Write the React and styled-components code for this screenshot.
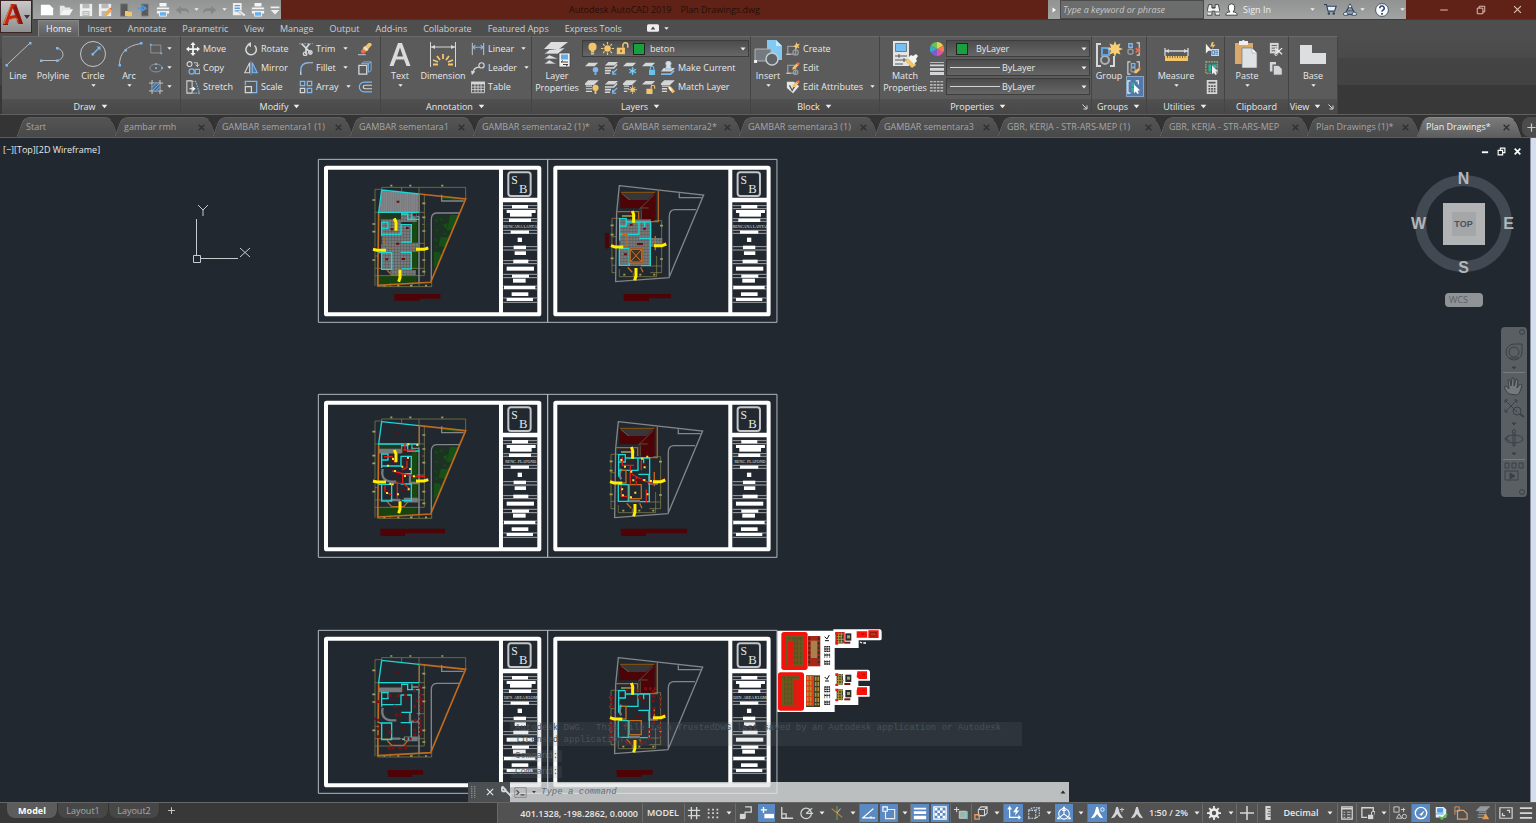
import React from 'react';
import styled, { createGlobalStyle } from 'styled-components';

const L = '#d4d6d8';
const B = '#7fb8ee';
const Y = '#f3c56b';
const G = '#959a9f';

/* small icons, all drawn on a 16 x 16 grid */
const icons = {
  caret: <path d="M3 5h10l-5 6z" fill="#eee" />,
  rect: <><path d="M2 3.500h11.500v9H2z" fill="none" stroke={G} /><path d="M1 2h2v2H1zM13 12h2v2h-2z" fill={B} /></>,
  ellipse: <><ellipse cx="8" cy="8" rx="7" ry="4.500" fill="none" stroke={G} /><path d="M7 7h2v2H7zM7 2.500h2v2H7zM14 7h2v2h-2z" fill={B} /></>,
  hatch: <><path d="M3.500 0v16M12.500 0v16M0 3.500h16M0 12.500h16" stroke={L} /><path d="M4 4h8v8H4z" fill="#476a92" /><path d="M4 8l4-4M4 12l8-8M8 12l4-4" stroke={B} /></>,
  move: <path d="M8 0l3 3.500H9V7h3.500V5L16 8l-3.500 3V9H9v3.500h2L8 16l-3-3.500h2V9H3.500v2L0 8l3.500-3v2H7V3.500H5z" fill="#f2f2f2" />,
  rotate: <><path d="M5 3.500a6 6 0 1 0 7 .5" fill="none" stroke={L} strokeWidth="1.800" /><path d="M8 0v6L3.500 2.500z" fill={L} /></>,
  trim: <><path d="M0 2h16" stroke={B} strokeDasharray="2 1" /><path d="M3 2l5 5v7M12 2L8 7l6 6" stroke={L} strokeWidth="2" fill="none" /><circle cx="7" cy="13.500" r="2" fill="none" stroke={L} strokeWidth="1.500" /><circle cx="13" cy="12" r="2" fill="none" stroke={L} strokeWidth="1.500" /></>,
  eraser: <><path d="M14.500 1l1.500 2-7 8-4-3 7-7z" fill={Y} /><path d="M9 11l-4-3-2 2.500q1 3 3.500 3z" fill="#ef6b4d" /><path d="M6.500 5.500l5 4" stroke="#eee" strokeWidth="1.500" /><path d="M0 14.500h9" stroke={L} /></>,
  copy: <><circle cx="4" cy="3.500" r="2.800" fill="none" stroke={L} strokeWidth="1.300" /><path d="M9 2h4v4M11 4l2 2.500L15 4" fill="none" stroke={L} /><circle cx="6.500" cy="12" r="3" fill="none" stroke={B} strokeWidth="1.300" /><path d="M10.500 9.500h5v5h-5z" fill="none" stroke={B} strokeWidth="1.300" /></>,
  mirror: <><path d="M6.500 2v11.500H.8z" fill="none" stroke={L} strokeWidth="1.200" /><path d="M9.500 2v11.500h5.700z" fill="#4f78a8" stroke={B} strokeWidth="1.200" /><path d="M8 0v16" stroke={B} strokeWidth=".7" /></>,
  fillet: <><path d="M2 16V11Q2 2 11 2" fill="none" stroke={B} strokeWidth="1.600" /><path d="M11 2h5M2 12v4" stroke={L} /></>,
  explode: <><path d="M1 5h9v10H1z" fill="none" stroke={L} strokeWidth="1.500" /><path d="M4 3l3-2h8v10l-3 2M10 5l5-4M12 3v10M4 3h8" fill="none" stroke={B} /></>,
  stretch: <><path d="M1 1h6v14H1z" fill="none" stroke={L} strokeWidth="1.200" /><path d="M7 2l4-.5L15.500 15H8" fill="none" stroke={B} strokeDasharray="2 1" strokeWidth="1.200" /><path d="M4 10h5M7.500 8l2.500 2-2.500 2" stroke="#fff" fill="none" strokeWidth="1.200" /></>,
  scale: <><path d="M1.500 6V1.500h13v13H9" fill="none" stroke={B} strokeWidth="1.400" /><path d="M1.500 7.500h7v7h-7z" fill="none" stroke={L} strokeWidth="1.400" /></>,
  array: <><path d="M1.500 1.500h5v5h-5zM9.500 1.500h5v5h-5zM9.500 9.500h5v5h-5z" fill="none" stroke={B} strokeWidth="1.400" /><path d="M1.500 9.500h5v5h-5z" fill="none" stroke={L} strokeWidth="1.400" /></>,
  offset: <><path d="M16 2.500H7a5.500 5.500 0 0 0 0 11h9" fill="none" stroke={B} strokeWidth="1.400" /><path d="M16 6H8a2 2 0 0 0 0 4h8" fill="none" stroke={L} strokeWidth="1.400" /></>,
  linear: <><path d="M1.500 1v14M14.500 1v14" stroke={L} /><path d="M2 6h12M5 3.500L2 6l3 2.500M11 3.500L14 6l-3 2.500" stroke={B} fill="none" strokeWidth="1.300" /></>,
  leader: <><path d="M1.500 15Q3 7 9 7" fill="none" stroke={L} strokeWidth="1.300" /><path d="M0 11l1 5 4-4z" fill={L} /><circle cx="12" cy="5" r="3" fill="none" stroke={L} strokeWidth="1.300" /></>,
  table: <><path d="M.5 2.500h15v12H.5z" fill="none" stroke={L} /><path d="M0 2h16v3H0z" fill={L} /><path d="M0 8h16M0 11h16M4.500 3v11M8 3v11M11.500 3v11" stroke={L} /></>,
  bulb: <><circle cx="8" cy="6" r="5" fill={Y} /><path d="M6 10h4v3H6z" fill={Y} /><path d="M6 14.500h4" stroke={L} strokeWidth="1.500" /></>,
  sun: <><circle cx="8" cy="8" r="4" fill={Y} /><path d="M8 0v3M8 13v3M0 8h3M13 8h3M2.500 2.500l2 2M11.500 11.500l2 2M13.500 2.500l-2 2M2.500 13.500l2-2" stroke={Y} strokeWidth="1.500" /></>,
  unlock: <><path d="M1 7h10v8H1z" fill={Y} /><path d="M8.500 7V4a3 3 0 0 1 6 0v3" fill="none" stroke={Y} strokeWidth="1.800" /><path d="M5.500 9.500h1.500v3H5.500z" fill="#5a4a25" /></>,
  layOff: <><path d="M4 2h11l-4 4H0z" fill={L} /><circle cx="12" cy="10" r="3.200" fill={B} /><path d="M11 13h2v3h-2z" fill={B} /></>,
  layIso: <><path d="M5 1h11l-4 4H1z" fill={L} /><path d="M1 8h10l4-4M1 11h7M1 14h6" stroke={L} fill="none" strokeWidth="1.800" /><path d="M15 9l-5 5M10 11v4h4" stroke={B} fill="none" strokeWidth="1.500" /></>,
  layFrz: <><path d="M4 2h11l-4 4H0z" fill={L} /><circle cx="11" cy="11.500" r="3.500" fill="#3c91b8" /><path d="M11 7v9M7 9.500l8 4M15 9.500l-8 4" stroke="#8bd5ee" /></>,
  layLock: <><path d="M4 2h11l-4 4H0z" fill={L} /><path d="M8 10h7v6H8z" fill="#6cc1ea" /><path d="M9.500 10V8a2 2 0 0 1 4 0v2" fill="none" stroke="#6cc1ea" strokeWidth="1.300" /></>,
  layCur: <><path d="M3 8h13l-4 4H0z" fill={L} /><path d="M0 15h11l4-4" stroke={B} strokeWidth="2" fill="none" /><path d="M5 9l1-4a3.200 3.200 0 1 1 5 0l1 4z" fill="#ddd" stroke="#63a6d8" strokeWidth=".7" /></>,
  layOn: <><path d="M4 1h10l-4 4H0zM1 7h7M1 10h7M1 13h7" fill={L} stroke={L} strokeWidth="1.400" /><circle cx="12" cy="9" r="3.500" fill={Y} /><path d="M11 12h2v4h-2z" fill={Y} /></>,
  layThaw: <><path d="M4 1h10l-4 4H0zM1 7h6M1 10h6M1 13h4" fill={L} stroke={L} strokeWidth="1.400" /><circle cx="11" cy="11" r="2.500" fill={Y} /><path d="M11 6v10M6 11h10M8 8l6 6M14 8l-6 6" stroke={Y} /></>,
  layUn: <><path d="M4 1h11l-4 4H0z" fill={L} /><path d="M5 10h7v6H5z" fill={Y} /><path d="M10.500 10V8a2 2 0 0 1 4 0v2" fill="none" stroke={Y} strokeWidth="1.300" /></>,
  layMatch: <><path d="M4 1h10l-4 4H0zM1 7h9M1 10h6M1 13h6" fill={L} stroke={L} strokeWidth="1.500" /><path d="M8 9l3-2 5 6-3 2z" fill={Y} /><path d="M9 8l3 4" stroke="#fff" strokeWidth="1.500" /></>,
  create: <><path d="M2 5h9v9H2z" fill="none" stroke={G} strokeWidth="1.500" /><circle cx="11" cy="12" r="3" fill="none" stroke={G} strokeWidth="1.500" /><path d="M0 14h5" stroke={L} /><path d="M12 0l1 2.500 3-.5-2 2.500 1.500 2.500-2.800-.7L11 9l-.5-3L8 5l2.500-1.200z" fill={Y} /></>,
  edit: <><path d="M2 5h9v9H2z" fill="none" stroke={G} strokeWidth="1.500" /><circle cx="11" cy="13" r="2.500" fill="none" stroke={G} strokeWidth="1.500" /><path d="M0 14h5" stroke={L} /><path d="M7 10l1-3 5-5 2 2-5 5z" fill={Y} /><path d="M12 3l2-2 2 2-2 2z" fill="#ef6b4d" /></>,
  attr: <><path d="M1 2h8l6 5-7 8-7-6z" fill="#e6e6e6" /><path d="M4 6l3 6 3-5" stroke="#555" fill="none" strokeWidth="1.500" /><path d="M7 8l1-3 5-4 2 2-5 5z" fill={Y} /><path d="M12 2l2-2 2 2-2 2z" fill="#ef6b4d" /></>,
  wheel: <><path d="M8 8V0a8 8 0 0 1 7 4z" fill="#e8d24d" /><path d="M8 8l7-4a8 8 0 0 1 0 8z" fill="#ef7b57" /><path d="M8 8l7 4a8 8 0 0 1-7 4z" fill="#d9569f" /><path d="M8 8v8a8 8 0 0 1-7-4z" fill="#8058d8" /><path d="M8 8l-7 4a8 8 0 0 1 0-8z" fill="#37aacb" /><path d="M8 8L1 4a8 8 0 0 1 7-4z" fill="#69bf5a" /></>,
  weights: <path d="M0 1h16v1H0zM0 4h16v2H0zM0 8h16v3H0zM0 12.500h16V16H0z" fill={L} />,
  types: <path d="M0 2h16M0 5.500h16M0 9h16M0 12.500h16" stroke={L} strokeDasharray="3 1" strokeWidth="1.300" />,
  ungroup: <><path d="M11 1h3v14h-3" fill="none" stroke={L} strokeWidth="1.300" /><circle cx="4" cy="11" r="3" fill="none" stroke={G} strokeWidth="1.500" /><path d="M2 2h4v4H2z" fill="none" stroke={B} strokeWidth="1.500" /><path d="M10 7l5 5M15 7l-5 5" stroke="#f06a4a" strokeWidth="1.800" /></>,
  groupEdit: <><path d="M4 1H1v14h3M11 1h3v8" fill="none" stroke={L} strokeWidth="1.300" /><circle cx="7" cy="10" r="2.500" fill="none" stroke={G} strokeWidth="1.500" /><path d="M5 3h4v4H5z" fill="none" stroke={B} strokeWidth="1.300" /><path d="M8 14l1-3 4-3 2 2-4 4z" fill={Y} /><path d="M13 8l2-1 1 2-1 1z" fill="#ef6b4d" /></>,
  groupSel: <><path d="M4 1H1v14h3M10 1h3v4" fill="none" stroke="#e8eef5" strokeWidth="1.400" /><path d="M5 3h4v4H5zM5 9h4v5H5z" fill="#26b39a" /><path d="M8 5v10l2-2 2 3 1.500-1-1.500-3h3z" fill="#fff" /></>,
  selSim: <><path d="M1 2v11l3-3h4z" fill="#eee" /><path d="M7 8h9v8H7z" fill={L} /><path d="M8 10h3v4H8zM12 10h3M12 12h3M12 14h3" stroke="#3978b8" fill="none" /><path d="M8 0L6 5h3L8 8l4-5H9l1-3z" fill={Y} /></>,
  selAll: <><path d="M1 1h13v13H1z" fill="none" stroke="#8bc572" strokeDasharray="2 1" strokeWidth="1.300" /><path d="M4 4h3v8H4zM8 4h5v4H8z" fill="#27b7a1" /><path d="M8 5v10l2-2 2 3 1.500-1-1.500-3h3z" fill="#eee" /></>,
  calc: <><path d="M2 0h12v16H2z" fill={L} /><path d="M4 2h8v2H4zM4 6h2v2H4zM7 6h2v2H7zM10 6h2v2h-2zM4 9h2v2H4zM7 9h2v2H7zM10 9h2v2h-2zM4 12h2v2H4zM7 12h2v2H7zM10 12h2v2h-2z" fill="#555" /></>,
  cut: <><path d="M1 1h10v12H1z" fill={L} /><path d="M3 4h6M3 7h6M3 10h4" stroke="#555" /><path d="M7 7l8 7M15 7l-8 7" stroke="#eee" strokeWidth="1.500" /><circle cx="8" cy="14" r="1.500" fill="none" stroke={L} /></>,
  copyClip: <><path d="M1 1h7v3H4v8H1z" fill={L} /><path d="M5 5h6l4 4v7H5z" fill={L} stroke="#555" strokeWidth=".7" /></>,
  newFile: <path d="M1 2h10l4 4v8H1z" fill="#fff" />,
  open: <><path d="M1 3h5l1 2h6v2H5l-4 7z" fill="#e6e6e6" /><path d="M5 7h11l-4 7H1z" fill="#f4f4f4" /></>,
  save: <><path d="M1 1h14v14H1z" fill="#eee" /><path d="M4 1h8v5H4zM4 9h8v6H4z" fill="#b8b8b8" /><path d="M5 11h6M5 13h6" stroke="#eee" /></>,
  saveAs: <><path d="M1 1h14v14H1z" fill="#eee" /><path d="M4 1h8v5H4zM4 9h6v6H4z" fill="#b8b8b8" /><path d="M7 15l1-4 5-5 3 3-5 5z" fill="#e5ae55" /><path d="M13 6l1-1 2 2-1 1z" fill="#e5553a" /></>,
  devOpen: <><path d="M3 1h8v14H3z" fill="#5a5a5a" stroke="#777" /><path d="M8 9h3l1 1h4v5H8z" fill={Y} /></>,
  devSave: <><path d="M5 1h8v14H5z" fill="#5a5a5a" stroke="#888" /><path d="M1 6h6M6 3l4 3-4 3" stroke="#4d9be3" strokeWidth="2" fill="none" /></>,
  print: <><path d="M4 0h8v4H4zM1 5h14v7H1z" fill="#f4f4f4" /><path d="M1 8h14" stroke="#888" strokeWidth="1.500" /><path d="M4 10h8v5H4z" fill="#62b2ee" stroke="#f4f4f4" /></>,
  undo: <path d="M1 8l6-5v3h4q5 0 5 6-1-3-5-3H7v4z" fill="#848687" />,
  redo: <path d="M15 8L9 3v3H5Q0 6 0 12q1-3 5-3h4v4z" fill="#848687" />,
  plotPrev: <><path d="M1 0h10v14H1z" fill="#eee" /><path d="M3 3h6M3 6h6M3 9h5" stroke="#5aa1dc" strokeWidth="1.500" /><path d="M6 9l3-1 7 5-2 3z" fill="#dfe5ea" stroke="#777" strokeWidth=".5" /></>,
  qatMore: <path d="M3 4h10v2H3zM3 8h10l-5 5z" fill="#eee" />,
  play: <path d="M5 3l7 5-7 5z" fill="#fff" />,
  binoc: <><path d="M2 2h4v4h4V2h4l2 9v4h-6v-5H6v5H0v-4z" fill="#f3f3f3" stroke="#333" /><path d="M6 6h4M1 11h4M11 11h4" stroke="#333" /></>,
  user: <path d="M1 15q0-4 5-4-2-2-2-6a4 4 0 0 1 8 0q0 4-2 6 5 0 5 4z" fill="#fff" stroke="#444" strokeWidth="1.200" />,
  cart: <><path d="M0 2h3l2 8h8l2-6H4" fill="#e8f0fa" stroke="#2d4158" strokeWidth="1.300" /><circle cx="6" cy="13" r="1.500" fill="#2d4158" /><circle cx="12" cy="13" r="1.500" fill="#2d4158" /></>,
  a360: <><path d="M8 2l6 11H2z" fill="none" stroke="#344a66" strokeWidth="1.500" /><path d="M8 1l2 3-2 2-2-2zM0 12l4-2 2 4H1zM16 12l-4-2-2 4h5zM5 9h6" fill="#eef2f7" stroke="#344a66" /></>,
  help: <><circle cx="8" cy="8" r="7.300" fill="#fff" stroke="#34465c" /><path d="M5.500 6a2.500 2.500 0 1 1 3.500 2.200Q8 8.700 8 10" fill="none" stroke="#2a4870" strokeWidth="1.800" /><path d="M7 11.500h2v2H7z" fill="#2a4870" /></>,
  min: <path d="M2 8h12" stroke="#e5c6bd" strokeWidth="1.500" />,
  restore: <path d="M2 5h9v9H2zM5 5V2h9v9h-3" fill="none" stroke="#e5c6bd" strokeWidth="1.500" />,
  close: <path d="M3 3l10 10M13 3L3 13" stroke="#e5c6bd" strokeWidth="1.500" />,
  minW: <path d="M3 10h10" stroke="#fff" strokeWidth="3" />,
  restoreW: <path d="M2 6h8v8H2zM6 6V2h8v8h-4" fill="none" stroke="#fff" strokeWidth="2" />,
  closeW: <path d="M3 3l10 10M13 3L3 13" stroke="#fff" strokeWidth="3" />,
  x: <path d="M3 3l10 10M13 3L3 13" stroke="#303030" strokeWidth="2.500" />,
  plus: <path d="M8 2v12M2 8h12" stroke="#c8c8c8" strokeWidth="1.800" />,
  screen: <><rect x="0" y="3" width="16" height="10" rx="2" fill="#eee" /><path d="M5 10l3-4 3 4z" fill="#444" /></>,
  launch: <path d="M3 3l8 8M12 5v7H5" stroke="#ddd" strokeWidth="2" fill="none" />,
  grid: <path d="M5 1v14M11 1v14M1 5h14M1 11h14" stroke={L} strokeWidth="1.500" />,
  dots: <path d="M2 3h2v2H2zM7 3h2v2H7zM12 3h2v2h-2zM2 7h2v2H2zM7 7h2v2H7zM12 7h2v2h-2zM2 12h2v2H2zM7 12h2v2H7zM12 12h2v2h-2z" fill={L} />,
  infer: <><path d="M7 1h7v6H7v7" fill="none" stroke={L} strokeWidth="1.400" /><path d="M1 9h6v6H1z" fill={L} /></>,
  dyn: <><path d="M4 1v7M1 4.500h7" stroke="#fff" strokeWidth="1.500" /><path d="M5 9h11v5H5z" fill="#fff" /></>,
  ortho: <path d="M2 1v13h13M2 9h5v5" fill="none" stroke={L} strokeWidth="1.500" />,
  polar: <><circle cx="7" cy="8.500" r="6" fill="none" stroke={L} strokeWidth="1.400" /><path d="M7 8.500h8M7 8.500l7-6M11 3v3" stroke={L} strokeWidth="1.300" /></>,
  iso: <><path d="M8 0v16" stroke="#5f9a4f" strokeWidth="1.500" /><path d="M2 3l12 10" stroke="#c98050" strokeWidth="1.300" /><path d="M12 3L8 8" stroke={L} /></>,
  track: <><path d="M15 13.500H1L13 3" fill="none" stroke="#fff" strokeWidth="1.500" /><path d="M9 12h2v2H9z" fill="#fff" /></>,
  osnap: <><path d="M4 4h10.500v10.500H4z" fill="none" stroke="#eee" strokeWidth="1.300" /><path d="M1 1h5v5H1z" fill="#5a8cc5" stroke="#fff" strokeWidth="1.300" /></>,
  lwt: <path d="M1 2h14v2H1zM1 6h14v3H1zM1 11h14v4H1z" fill="#fff" />,
  transp: <><path d="M1 1h14v14H1z" fill="none" stroke="#fff" strokeWidth="1.500" /><path d="M2 2h3v3H2zM8 2h3v3H8zM5 5h3v3H5zM11 5h3v3h-3zM2 8h3v3H2zM8 8h3v3H8zM5 11h3v3H5zM11 11h3v3h-3z" fill="#fff" /></>,
  cycle: <><path d="M6 6h8v8H6z" fill="#9ab7a8" stroke={L} /><path d="M3 1v6M0 4h6" stroke={L} strokeWidth="1.200" /><path d="M15 6v9" stroke="#52d6c6" strokeWidth="1.500" /></>,
  osnap3: <><path d="M5 4l3-3h7v7l-3 3H5zM5 4h7v7M12 4l3-3" fill="none" stroke={L} strokeWidth="1.200" /><path d="M1 10h5v5H1z" fill="none" stroke="#e39b62" strokeWidth="1.500" /></>,
  ducs: <><path d="M3 2v11h12M1 4l2-3 2 3M13 11l2 2-2 2" fill="none" stroke="#fff" strokeWidth="1.400" /><path d="M11 1L7 7h3l-1 4 5-6h-3l2-4z" fill="#fff" /></>,
  filter: <><path d="M2 5l4-3h8v9l-4 3H2zM2 5h8v9M10 5l4-3" fill="none" stroke={L} strokeDasharray="2 1" strokeWidth="1.200" /><path d="M1 4h2v2H1zM13 1h2v2h-2zM1 13h2v2H1zM9 4h2v2H9z" fill={B} /></>,
  gizmo: <><circle cx="8" cy="9" r="6" fill="none" stroke="#fff" strokeWidth="1.200" /><path d="M8 2v7l5 4M8 9l-5 4M6 5h4" fill="none" stroke="#fff" strokeWidth="1.300" /><path d="M8 0l2 3H6zM1 12l3 3H0zM15 12l-3 3h4z" fill="#fff" /></>,
  ann1: <><path d="M6 1h2l2 7 4 6-4-1-3-4-3 4-4 1 4-6z" fill="#fff" /><circle cx="13" cy="4" r="2" fill="none" stroke="#fff" /></>,
  ann2: <><path d="M6 1h2l2 7 4 6-4-1-3-4-3 4-4 1 4-6z" fill={L} /><path d="M10 4h5M12.500 2v5" stroke={L} /></>,
  ann3: <path d="M7 1h2l2 7 4 6-4-1-3-4-3 4-4 1 4-6z" fill={L} />,
  gear: <><circle cx="8" cy="8" r="4" fill="none" stroke="#ececec" strokeWidth="3" /><path d="M8 0v4M8 12v4M0 8h4M12 8h4M2.500 2.500l3 3M10.500 10.500l3 3M13.500 2.500l-3 3M2.500 13.500l3-3" stroke="#ececec" strokeWidth="2" /></>,
  cross: <path d="M8 0v16M0 8h16" stroke={L} strokeWidth="1.800" />,
  ruler: <><path d="M5 0h6v16H5z" fill={L} /><path d="M7 3h4M8 6h3M7 9h4M8 12h3" stroke="#555" /></>,
  props: <><path d="M2 1h12v14H2z" fill="none" stroke={L} strokeWidth="1.400" /><path d="M2 3h12" stroke={L} strokeWidth="2" /><path d="M4 7h2M8 7h4M4 10h2M8 10h4M4 13h2M8 13h4" stroke={L} /></>,
  lockUi: <><path d="M7 13H1V2h13v4" fill="none" stroke={L} strokeWidth="1.500" /><path d="M8 10h6v5H8z" fill={L} /><path d="M12 10V8a2 2 0 0 1 4 0v2" fill="none" stroke={L} strokeWidth="1.200" /></>,
  isolate: <><path d="M1 1h6v6H1zM9 4h5M12 2v5" fill="none" stroke={L} /><path d="M7 9l3 5H4z" fill="none" stroke={L} /><circle cx="13" cy="12" r="2.500" fill="none" stroke={L} /></>,
  perf: <><circle cx="8" cy="8" r="6.500" fill="none" stroke="#fff" strokeWidth="1.500" /><path d="M6 10l6-5-3 6z" fill="#fff" /></>,
  drive: <><path d="M2 1h9l3 3v9H2z" fill="#e7eef5" /><path d="M4 3h6v4H4zM2 9h9" fill="#4d9be3" stroke="#4d9be3" /><path d="M6 12l3 3 6-6" stroke="#52c142" strokeWidth="2" fill="none" /></>,
  paper: <><path d="M4 5h7l4 4v6H4z" fill="none" stroke="#d7a06a" strokeWidth="1.400" /><path d="M1 1h5v5H1zM1 6v4" fill="none" stroke="#d7a06a" /></>,
  stack: <><path d="M5 1h10l-4 4H1zM3 7h9M2 10h9M2 13h6" fill={G} stroke={G} strokeWidth="1.400" /><path d="M11 8l4 7H7z" fill="#e39b52" /></>,
  full: <><path d="M1 2h14v12H1z" fill="none" stroke={L} strokeWidth="1.400" /><path d="M9 5h3v3M7 11H4V8" fill="none" stroke={L} strokeWidth="1.400" /></>,
  menu: <path d="M1 2.500h14M1 8h14M1 13.500h14" stroke={L} strokeWidth="2" />,
  wrench: <path d="M2 1l4 4-1 2-3 0Q0 4 2 1zM6 6l8 8" stroke="#d5d8da" strokeWidth="2.500" fill="none" />,
  grip: <path d="M5 0v16M9 0v16" stroke="#989c9f" strokeWidth="1.500" strokeDasharray="1.500 1.500" />,
  closeC: <path d="M3 3l10 10M13 3L3 13" stroke="#dfe1e2" strokeWidth="2" />,
  prompt: <><path d="M1 2h14v12H1z" fill="none" stroke="#7f8284" /><path d="M3 5l3 3-3 3M8 11h5" fill="none" stroke="#4a4d50" strokeWidth="1.500" /></>,
  upDark: <path d="M3 11h10L8 5z" fill="#2b2b2b" />,
  caretDark: <path d="M3 5h10l-5 6z" fill="#34383c" />,
};

/* large ribbon icons, 28 x 28 grid */
const bigs = {
  line: <><path d="M2.700 25L26 3" stroke="#b8bcc0" /><path d="M1.500 24H4v2.500H1.500zM25 2h2.500v2.500H25z" fill={B} /></>,
  pline: <><path d="M2 20.500h16a6 6 0 0 0 0-12" fill="none" stroke="#b8bcc0" /><path d="M1 19.500h2.500V22H1zM17 19.500h2.500V22H17zM17 7h2.500v2.500H17z" fill={B} /></>,
  circle: <><circle cx="14" cy="14" r="12.500" fill="none" stroke="#c2c5c8" /><path d="M14 14l6-6" stroke={B} strokeWidth="1.500" /><path d="M21.500 6.500v4l-4-4zM12.500 13H15v2.500h-2.500z" fill={B} /></>,
  arc: <><path d="M4.500 25.500Q4 7 26 3.500" fill="none" stroke="#b8bcc0" /><path d="M3.500 24H6v2.500H3.500zM9.500 9H12v2.500H9.500zM25 2h2.500v2.500H25z" fill={B} /></>,
  text: <path d="M12 3h4l8.500 23h-4L18 19.500h-8L7.500 26h-4zM14 7.500L11 16.500h6z" fill="#d9dbdd" fillRule="evenodd" />,
  dim: <><path d="M1.500 2v25M26.500 2v25" stroke={L} /><path d="M2 7h24" stroke={L} /><path d="M2 7l4-2v4zM26 7l-4-2v4z" fill={L} /><path d="M14 14v5M8 16l3 4M20 16l-3 4M4 20l5 2M24 20l-5 2M4 24.500h5M24 24.500h-5" stroke={Y} strokeWidth="1.800" /></>,
  layers: <><path d="M8 2h17l-9 7H1z" fill="#dcdedf" /><path d="M6 10l-5 4h14l7-6M6 15l-5 4h14M6 20l-5 4h12" fill="#dcdedf" stroke="#5b5b5b" strokeWidth=".7" /><path d="M16 13h11v14H16z" fill="#f0f0f0" stroke="#444" strokeWidth=".7" /><path d="M18 14.500h7v5h-7z" fill="#63acea" /><path d="M18 22h7M20 24.500h5M18 22l2-1.500M25 24.500l-2 1.500" stroke="#444" /></>,
  insert: <><path d="M13 0h9l6 6v14H13z" fill="#82c9f4" /><path d="M22 0v6h6z" fill="#c9e7fa" /><path d="M1 9h16v12H1z" fill="#747a80" stroke="#aeb4ba" /><circle cx="18" cy="19" r="6" fill="#5e6468" stroke="#c7cbcf" strokeWidth="1.500" /><path d="M0 20h3v3H0z" fill="#eee" /></>,
  match: <><path d="M2 1h16v25H2z" fill="#e3e4e5" /><path d="M4.500 3.500h11v8h-11z" fill="#75c0f3" stroke="#666" strokeWidth=".8" /><path d="M4 16h12M4 20h12M4 24h8M8 14v4M13 18v4" stroke="#555" /><path d="M14 21l5-4 6 8-4 3z" fill={Y} /><path d="M17 18l6 6 3-3-1-2 2-3-2-2-3 2-2-1z" fill="#f4f4f4" /></>,
  group: <><path d="M6 4H2v22h4M15 26h4V16" fill="none" stroke={L} strokeWidth="2" /><circle cx="10" cy="20" r="4" fill="none" stroke="#abb0b5" strokeWidth="2" /><path d="M7 8h7v7H7z" fill="none" stroke="#5fa5e5" strokeWidth="2" /><path d="M20 1l1.500 4 4-1.500-1.500 4 4 1.500-4 1.500 1.500 4-4-1.500-1.500 4-1.500-4-4 1.500 1.500-4-4-1.500 4-1.500-1.500-4 4 1.500z" fill="#f9cf76" /></>,
  measure: <><path d="M3 8v8M26 8v8M3 11h23" stroke={L} strokeWidth="1.300" /><path d="M3 11l4-2v4zM26 11l-4-2v4z" fill={L} /><path d="M3 16h23v5H3z" fill={Y} /><path d="M5 17h20" stroke="#806b3e" strokeWidth="2" strokeDasharray="1 1.500" /></>,
  paste: <><path d="M2 3h18v21H2z" fill="#d8a968" /><path d="M6 1h3q1-2 3 0h3v4H6z" fill="#eee" /><path d="M9 8h10l5 5v15H9z" fill="#dfe2e4" stroke="#777" strokeWidth=".7" /><path d="M19 8v5h5z" fill="#fff" stroke="#888" strokeWidth=".5" /></>,
  base: <path d="M1 5h12v8h14v11H1z" fill="#dcdedf" />,
};

function Icon({ name, size = 14 }) {
  return <svg width={size} height={size} viewBox="0 0 16 16" aria-hidden="true">{icons[name]}</svg>;
}

function Big({ icon, label, caret, w }) {
  return (
    <BigButton $w={w}>
      <svg width="28" height="28" viewBox="0 0 28 28" aria-hidden="true">{bigs[icon]}</svg>
      <span>{label}</span>
      {caret && <Icon name="caret" size={7} />}
    </BigButton>
  );
}

function Tool({ icon, label, name, caret, active }) {
  return (
    <ToolButton aria-label={label || name} $on={active}>
      <Icon name={icon} />
      {label && <span>{label}</span>}
      {caret && <Icon name="caret" size={7} />}
    </ToolButton>
  );
}

function Panel({ title, w, caret = true, launch, children }) {
  return (
    <PanelBox $w={w}>
      <PanelBody>{children}</PanelBody>
      <PanelTitle>
        <span>{title}</span>
        {caret && <Icon name="caret" size={9} />}
        {launch && <Launch aria-label={title + ' settings'}><Icon name="launch" size={8} /></Launch>}
      </PanelTitle>
    </PanelBox>
  );
}

const menuTabs = ['Home', 'Insert', 'Annotate', 'Parametric', 'View', 'Manage', 'Output', 'Add-ins', 'Collaborate', 'Featured Apps', 'Express Tools'];

const files = [
  ['Start', 98], ['gambar rmh', 98], ['GAMBAR sementara1 (1)', 137], ['GAMBAR sementara1', 123],
  ['GAMBAR sementara2 (1)*', 140], ['GAMBAR sementara2*', 126], ['GAMBAR sementara3 (1)', 136],
  ['GAMBAR sementara3', 123], ['GBR, KERJA - STR-ARS-MEP (1)', 162], ['GBR, KERJA - STR-ARS-MEP', 147],
  ['Plan Drawings (1)*', 110], ['Plan Drawings*', 101],
];

const quick = [
  ['newFile', 'New', 19], ['open', 'Open', 20], ['save', 'Save', 19], ['saveAs', 'Save As', 20], ['devOpen', 'Open from mobile', 19],
  ['devSave', 'Save to mobile', 19], ['print', 'Plot', 19], ['undo', 'Undo', 19], ['caret', 'Undo list', 10], ['redo', 'Redo', 18],
  ['caret', 'Redo list', 10], ['plotPrev', 'Sheet set', 20], ['print', 'Batch plot', 18], ['qatMore', 'Customize', 15],
];

/* icon, name, width, switched on, divider at the left */
const status = [
  ['grid', 'Grid', 19, 0, 1], ['dots', 'Snap', 20], ['caret', 'Snap list', 12], ['infer', 'Infer constraints', 22, 0, 1],
  ['dyn', 'Dynamic input', 19, 1], ['ortho', 'Ortho', 21], ['polar', 'Polar tracking', 19], ['caret', 'Polar list', 11],
  ['iso', 'Isometric drafting', 20], ['caret', 'Isometric list', 12], ['track', 'Snap tracking', 20, 1, 1], ['osnap', 'Object snap', 20, 1],
  ['caret', 'Object snap list', 11], ['lwt', 'Lineweight', 20, 1, 1], ['transp', 'Transparency', 20, 1], ['cycle', 'Selection cycling', 21, 0, 1],
  ['osnap3', '3D object snap', 20, 0, 1], ['caret', '3D snap list', 12], ['ducs', 'Dynamic UCS', 21, 1, 1], ['filter', 'Selection filter', 19],
  ['caret', 'Filter list', 11], ['gizmo', 'Gizmo', 20, 1], ['caret', 'Gizmo list', 13], ['ann1', 'Annotation visibility', 21, 1, 1],
  ['ann2', 'Auto scale', 19], ['ann3', 'Annotation scale', 19], ['1:50 / 2%', '', 45], ['caret', 'Scale list', 11],
  ['gear', 'Workspace', 23, 0, 1], ['caret', 'Workspace list', 11], ['cross', 'Annotation monitor', 21, 0, 1], ['ruler', 'Units', 22, 0, 1],
  ['Decimal', '', 44], ['caret', 'Units list', 14], ['props', 'Quick properties', 19, 0, 1], ['lockUi', 'Lock UI', 23, 0, 1],
  ['caret', 'Lock list', 10], ['isolate', 'Isolate objects', 22, 0, 1], ['perf', 'Hardware acceleration', 20, 1, 1], ['drive', 'Plot status', 20],
  ['paper', 'Trusted file', 20], ['stack', 'Layer alert', 24], ['full', 'Clean screen', 21, 0, 1], ['menu', 'Customization', 20],
];

/* title block bars: x, y, width, height */
const bars = [
  [606, 165, 48, 10], [590, 180, 87, 9], [600, 189, 65, 11], [597, 206, 66, 10], [602, 242, 55, 9], [623, 263, 13, 13],
  [611, 287, 37, 10], [614, 304, 34, 11], [610, 329, 45, 10], [590, 350, 82, 12], [606, 374, 51, 9], [609, 386, 38, 12],
  [582, 408, 94, 9], [605, 427, 50, 11], [590, 444, 79, 9],
];
const rules = [167, 176, 206, 214, 241, 250, 290, 300, 332, 341, 373, 383, 408, 417, 444, 457];
const notes = ['RENCANA LANTAI', 'RENC. PLAFOND', 'DEN. AREA KLOM'];
const rowTops = [12, 247, 483];
const shiftA = [0, -10, -2];

function Frame({ note }) {
  return (
    <g>
      <path d="M25 28H713V517H25z" fill="none" stroke="#b4b8bb" strokeWidth="3" />
      <rect x="48" y="53" width="640" height="440" rx="2" fill="none" stroke="#fff" strokeWidth="12" />
      <path d="M573 50V495" stroke="#fff" strokeWidth="12" />
      <path d="M574 150H690" stroke="#fff" strokeWidth="14" />
      <rect x="595" y="67" width="67" height="71" rx="8" fill="none" stroke="#c2c5c8" strokeWidth="6" />
      <SheetText x="604" y="103" fontSize="35">S</SheetText>
      <SheetText x="627" y="130" fontSize="38">B</SheetText>
      {rules.map(y => <path key={y} d={`M580 ${y}H683`} stroke="#a4a8ab" strokeWidth="3" />)}
      {bars.map(([x, y, w, h]) => <rect key={y} x={x} y={y} width={w} height={h} fill="#fff" />)}
      <SheetText x="632" y="234" fontSize="12" textAnchor="middle">{note}</SheetText>
    </g>
  );
}

/* ground floor; kind 0 tiles, 1 ceiling, 2 doors and windows */
function PlanA({ kind }) {
  return (
    <g fill="none" strokeWidth="3" transform={`translate(0 ${shiftA[kind]})`}>
      {kind < 2 && (
        <g>
          <path d="M370 195H447L367 370z" fill="#1c3323" />
          <path d="M420 195h26l-15 42-20 5zM392 262h28l-12 30-22-4zM372 305h16l10 18-26 30zM398 225l14-6v20zM397 137l68 9-7 7-61-7z" fill="#175016" />
          <path d="M374 210l10 4M390 205l8 6M376 240l8 3M400 250l9 3M372 268l9 4M398 300l6 3M382 330l5 3M414 258l6 2M376 290l7 2" stroke="#1a4a1a" strokeWidth="4" />
          <path d="M207 376H320V398L207 404z" fill="#16430f" />
          <path d="M306 205h15v152h-15z" fill="#174a12" />
          <path d="M208 190h64v22h-64z" fill="#1c3a20" />
        </g>
      )}
      <path d="M195 118V408M203 405V410H365V380M215 112H467V147M215 112V120M343 132V377H195M327 112V410M195 118H215M275 112V125M195 187H343M336 223H343M195 318H205M205 378V410M241 400V410M307 400V410M343 280H320M195 355H343" stroke="#8b8b4c" strokeWidth="2" />
      <path d="M187 150h9M187 222h9M187 245h9M187 330h9M337 160h9M337 202h9M337 243h9M337 330h9M337 365h9M241 107h6M298 107h6M394 107h6M220 407h6M262 407h6M300 407h6M345 407h6" stroke="#a0a060" strokeWidth="5" />
      <path d="M328 132L467 147L362 397L203 406L206 188" stroke="#c06a1d" strokeWidth="5" />
      <path d="M328 132V187M275 190V214M231 360l14 15h36l14-16" stroke="#b96820" strokeWidth="4" />
      <path d="M448 189H380Q364 190 364 208V392M395 134V153H461M307 200h20v198" stroke="#82868a" strokeWidth="4" />
      {kind === 0 && (
        <g>
          <path d="M215 122L326 132V186H207z" fill="url(#slats)" />
          <path d="M273 190H320V216H273zM212 208h62V226h31v52h20v27h-20v52h-28v17h-36v-17H215V218zM274 360h44v15h-44z" fill="url(#tiles)" />
          <path d="M215 283v24M224 263q-8 22 25 35M306 283v20" stroke="#a66a32" />
        </g>
      )}
      {kind > 0 && <path d="M210 205h62v7h-62zM218 262q-9 42 41 38M285 352h35v7h-35zM300 276v28h26M241 355h30" stroke="#777b7e" strokeWidth="7" />}
      <path d="M215 120L327 132M215 120L206 187H327M306 190v18H328M273 192h20v16h20M215 217v42M213 217h21v18h-21M215 253H273V223M272 224h32v52h-30M206 308h39v50h-30v-52M272 307h32v50h-28" stroke="#1cd7d4" strokeWidth="4" />
      {kind === 1 && (
        <g>
          <path d="M280 205h36M285 185v20M222 225h24l10 18M291 230v27l-15 8M246 268l34 8 30 8M278 276v28l22 18M225 310v20l20 10M262 300v50M250 305h30M310 285h35" stroke="#e11d16" strokeWidth="4" />
          <path d="M292 188h6M319 190h6M246 232h6M291 229h6M231 252h6M252 268h6M282 283h6M245 308h6M228 334h6M293 323h6M261 338h6M274 255h6M309 284h6M297 262h6M238 306h6" stroke="#ffe23d" strokeWidth="6" />
        </g>
      )}
      <path d="M260 155h8M242 238h8M288 234h8M258 281h10M226 328h8M275 327h10M308 194h10M196 292v6M346 285h8" stroke="#690c10" strokeWidth="6" />
      {kind === 2 && <path d="M203 240v10M205 295v35M204 345v12M240 222v8M265 222v8M287 220v8M330 198v12M314 207v8M333 220v55M320 238v12M314 255v14M331 285v60M316 296v12M314 325v22M250 258h16M255 284h18M238 380v10M250 378v12M270 380v10M287 378v10M285 355h20M236 335h12" stroke="#7c1013" strokeWidth="9" strokeDasharray="8 5" />}
      {kind < 2 && <path d="M253 205l5 12v25M189 298l12 3h27M318 298h24l13-4M270 359v24l-4 12" stroke="#ffee00" strokeWidth="9" />}
    </g>
  );
}

/* upper floor */
function PlanB({ kind }) {
  return (
    <g fill="none" strokeWidth="3" transform={kind > 0 ? 'translate(-3 3)' : undefined}>
      <path d="M240 107L493 135L389 383L229 395L232 188z M420 130V143H487M470 179H405Q390 181 390 198V381" stroke="#82868a" strokeWidth="4" />
      <path d="M243 125L349 127V212H306V175H243z" fill="#4c0407" />
      <path d="M245 129H345L324 150H268z" fill="#38363a" />
      <path d="M300 178L345 133M272 150L248 131M306 178V212M303 174h25" stroke="#687058" strokeWidth="2" />
      <path d="M357 122V215H306M231 185H298V210" stroke="#b85f19" strokeWidth="4" />
      <path d="M245 127H348" stroke="#7a4f12" strokeWidth="4" />
      <path d="M218 205V368H230M240 357V380H352V318M367 212V368H333M218 205H260M345 212H367M218 260H230M218 346H230M333 348H367M282 368V380" stroke="#8b8b4c" strokeWidth="2" />
      <path d="M214 226h9M214 254h9M214 325h9M362 227h9M362 327h9M248 198h40M252 374h6M300 374h6M342 374h6" stroke="#a0a060" strokeWidth="5" />
      {kind === 0 && <path d="M241 208h94v56h34v27h-34v57H240z" fill="url(#tiles)" />}
      {kind > 0 && <path d="M249 248q-9 20 0 32M333 268v25h26M270 345h35" stroke="#777b7e" strokeWidth="7" />}
      <path d="M241 206v22h20v-22zM241 214v58M261 216h73v49h-34M241 253h58v-37M300 216h16v16M240 296h30v50h-30v-50M333 266v81h-28" stroke="#1cd7d4" strokeWidth="4" />
      <path d="M273 296h36v42h-36zM248 253h15v38h-15M265 352l14 15M304 352l7 15M348 258v43" stroke="#c06a1d" strokeWidth="4" />
      {kind === 0 && <path d="M271 296h38v42h-38z" fill="#423328" />}
      {kind === 0 && <path d="M273 298h34v38h-34zl34 38M307 298l-34 38" stroke="#ca7528" strokeWidth="3" />}
      {kind === 1 && (
        <g>
          <path d="M252 213v25h35M309 223v30M276 240v55M280 264l36 20 30 10M249 296v35h18M324 310v40M294 274v22" stroke="#e11d16" strokeWidth="4" />
          <path d="M246 222h6M308 218h6M276 257h6M316 244h6M282 283h6M315 282h6M249 310h6M275 334h6M325 325h6M335 285h6M324 212h6M257 242h6M251 328h6M288 320h6" stroke="#ffe23d" strokeWidth="6" />
        </g>
      )}
      {kind === 2 && <path d="M220 222v42M219 292v70M262 205h38M345 205v40M347 254v55M333 318v42M366 222v40M366 292v58M262 362h62M304 222v14M318 200h34" stroke="#7c1013" strokeWidth="9" strokeDasharray="8 6" />}
      <path d="M272 224h8M312 236h8M293 282h18M254 313h9M222 280h6M371 277h8M275 185v10" stroke="#690c10" strokeWidth="6" />
      {kind === 0 && <path d="M197 249h12v43l-6 5-6-6z" fill="#4c0407" />}
      <path d="M279 183l4 10v25M215 287l12 4h25M344 287h24l13-5M290 354v24l-4 13" stroke="#ffee00" strokeWidth="9" />
    </g>
  );
}

/* drawing captions under the two plans of each row */
const captions = [
  ['M253 432h138v14H329v6H253z', 'M253 432h142v13h-66v8h-76z'],
  ['M211 431h194v14H285v8h-74z', 'M244 431h199v14H320v8h-74z'],
  ['M232 447h107v14h-33v7h-70z', 'M231 447h109v14h-34v7h-73z'],
];

function Details() {
  return (
    <g fill="none">
      <path d="M22 32H190V28H330Q335 28 335 36V56Q335 61 329 61H266V84H194V149H295Q300 151 300 156V182H265V198H299V230H265V255H194V276H22V150H22z" fill="#fff" />
      <rect x="34" y="36" width="79" height="114" rx="8" fill="#f8100b" />
      <path d="M48 46h52v93H48z" fill="#6f5720" />
      <path d="M53 64h17v73H53z" fill="#e11a10" />
      <path d="M74 52v80M82 52v80M92 52v80M52 55h46" stroke="#515320" strokeWidth="4" strokeDasharray="10 4" />
      <path d="M114 48h37v91h-37z" fill="#a72619" />
      <path d="M122 62h20v52h-20z" fill="#a78149" />
      <path d="M118 52v84M146 52v84" stroke="#293029" strokeWidth="5" strokeDasharray="8 6" />
      <rect x="24" y="157" width="78" height="115" rx="8" fill="#f8100b" />
      <path d="M36 168h52v91H36z" fill="#6f5720" />
      <path d="M70 180h17v75H70z" fill="#e11a10" />
      <path d="M44 174v80M54 174v80M64 174v80M38 172h48" stroke="#515320" strokeWidth="4" strokeDasharray="10 4" />
      <path d="M108 166h42v95h-42z" fill="#393b2c" />
      <path d="M108 166h24v92h-24z" fill="#d93f1d" />
      <path d="M113 168v86M122 168v86M137 170v86M145 170v86" stroke="#b8912d" strokeWidth="5" strokeDasharray="12 4" />
      {[0, 121].map(y => (
        <g key={y} transform={`translate(0 ${y})`}>
          <path d="M163 80h17M163 87h17M163 94h17M163 105h17M163 125h17M163 132h17" stroke="#222" strokeWidth="4" strokeDasharray="5 1" />
          <path d="M164 80v60M171 80v60M179 80v60" stroke="#444" strokeWidth="2" strokeDasharray="14 6" />
          <path d="M164 50l7 7 7-12M165 62h12" stroke="#111" strokeWidth="3" />
        </g>
      ))}
      {[[36, '#f8100b'], [160, '#fff'], [206, '#fff']].map(([y, c]) => (
        <g key={y} transform={`translate(196 ${y})`}>
          <path d="M0 0h28v34H0z" fill={c} />
          <path d="M4 2h19v32H4z" fill="#39402f" />
          <path d="M4 6h19M4 14h16M4 22h22M4 30h19M10 2v34M18 2v34" stroke="#b19a3a" strokeWidth="3" />
          <path d="M30 4h18v22H30z" fill="#252d33" />
          <path d="M35 10h9v9h-9z" fill="#a8a05c" />
          <path d="M27 29h18v6H27z" fill="#7d1510" />
          <path d="M0 0h9v8H0zM0 31h8v7H0z" fill="#ef1712" />
        </g>
      ))}
      <path d="M260 34h32v19h-32zM295 31h31v23h-31zM262 154h29v23h-24l-7-6zM262 202h29v23h-31v-13z" fill="#f8100b" />
      <path d="M300 38h19v10h-19zM275 42h8M278 164h7M278 211h6" fill="#a84815" stroke="#8b170c" strokeWidth="3" />
      <path d="M270 66l6 3M280 69h8" stroke="#fff" strokeWidth="4" />
    </g>
  );
}

function Model() {
  return (
    <ModelSpace role="img" aria-label="Plan drawings">
      <defs>
        <pattern id="slats" width="7" height="12" patternUnits="userSpaceOnUse">
          <path d="M0 0h7v12H0z" fill="#85878a" />
          <path d="M2 0v12" stroke="#686b6f" strokeWidth="2" />
        </pattern>
        <pattern id="tiles" width="9" height="9" patternUnits="userSpaceOnUse">
          <path d="M0 0h9v9H0z" fill="#77797b" />
          <path d="M0 0h9M0 0v9" stroke="#55595c" strokeWidth="3" />
        </pattern>
      </defs>
      {rowTops.map((top, row) => (
        <g key={row} transform={`translate(310 ${top}) scale(.3333)`}>
          <Frame note={notes[row]} />
          <PlanA kind={row} />
          <path d={captions[row][0]} fill="#4e0306" />
          <g transform="translate(688 0)">
            <Frame note={notes[row]} />
            <PlanB kind={row} />
            <path d={captions[row][1]} fill="#4e0306" />
          </g>
        </g>
      ))}
      <g transform="translate(770 482) scale(.3333)"><Details /></g>
      <path d="M196.500 81v36M200 120.500h38M193.500 117.500h7v7h-7zM198 67l5 5 5-5M203 72v6M240 110l10 9M250 110l-10 9" fill="none" stroke="#c8cbce" />
    </ModelSpace>
  );
}

function App() {
  return (
    <Window>
      <GlobalStyle />
      <Header>
        <AppButton aria-label="Application menu">
          <svg width="30" height="30" viewBox="0 0 30 30" aria-hidden="true">
            <path d="M2 22L10 2h5l7 20h-5l-2-6-7 2-1 4zM12 6l-3 8 5-1z" fill="#c3221a" fillRule="evenodd" />
            <path d="M3 22L10 3M14 2l7 19M8 18q8-4 12 3" stroke="#c98a2c" fill="none" />
            <path d="M15 2l7 20h-3L12 6zM2 22h5v1H2z" fill="#8a1611" />
            <path d="M23 13h6l-3 4z" fill="#333" />
          </svg>
        </AppButton>
        <TitleBar>
          <QuickBar>
            {quick.map(([icon, name, w], i) => (
              <CellButton key={i} aria-label={name} $w={w}><Icon name={icon} size={icon === 'caret' ? 7 : 14} /></CellButton>
            ))}
          </QuickBar>
          <Title><span>Autodesk AutoCAD 2019</span><span>Plan Drawings.dwg</span></Title>
          <InfoBar>
            <CellButton aria-label="Collapse search" $w={12}><Icon name="play" size={8} /></CellButton>
            <Search aria-label="Search" placeholder="Type a keyword or phrase" />
            <CellButton aria-label="Find" $w={18}><Icon name="binoc" size={13} /></CellButton>
            <SignIn><Icon name="user" size={13} /><span>Sign In</span><Icon name="caret" size={7} /></SignIn>
            <CellButton aria-label="App store" $w={22}><Icon name="cart" size={13} /></CellButton>
            <CellButton aria-label="Autodesk 360" $w={17}><Icon name="a360" size={14} /></CellButton>
            <CellButton aria-label="More" $w={8}><Icon name="caret" size={7} /></CellButton>
            <CellButton aria-label="Help" $w={32}><Icon name="help" size={14} /></CellButton>
            <CellButton aria-label="Help list" $w={8}><Icon name="caret" size={7} /></CellButton>
          </InfoBar>
          <WindowButtons>
            <CellButton aria-label="Minimize" $w={37}><Icon name="min" size={10} /></CellButton>
            <CellButton aria-label="Restore" $w={37}><Icon name="restore" size={10} /></CellButton>
            <CellButton aria-label="Close" $w={37}><Icon name="close" size={11} /></CellButton>
          </WindowButtons>
        </TitleBar>
        <MenuTabs>
          {menuTabs.map((t, i) => <MenuTab key={t} $on={i === 0}>{t}</MenuTab>)}
          <RibbonToggle aria-label="Ribbon display"><Icon name="screen" size={12} /><Icon name="caret" size={7} /></RibbonToggle>
        </MenuTabs>
      </Header>

      <Ribbon>
        <Panel title="Draw" w={179}>
          <Big icon="line" label="Line" w={32} />
          <Big icon="pline" label="Polyline" w={38} />
          <Big icon="circle" label="Circle" w={42} caret />
          <Big icon="arc" label="Arc" w={30} caret />
          <Column $w={30} $gap={5}>
            <Tool icon="rect" name="Rectangle" caret />
            <Tool icon="ellipse" name="Ellipse" caret />
            <Tool icon="hatch" name="Hatch" caret />
          </Column>
        </Panel>
        <Panel title="Modify" w={200}>
          <Column $w={58} $gap={5}>
            <Tool icon="move" label="Move" />
            <Tool icon="copy" label="Copy" />
            <Tool icon="stretch" label="Stretch" />
          </Column>
          <Column $w={55}>
            <Tool icon="rotate" label="Rotate" />
            <Tool icon="mirror" label="Mirror" />
            <Tool icon="scale" label="Scale" />
          </Column>
          <Column $w={59} $label={20}>
            <Tool icon="trim" label="Trim" caret />
            <Tool icon="fillet" label="Fillet" caret />
            <Tool icon="array" label="Array" caret />
          </Column>
          <Column $w={18}>
            <Tool icon="eraser" name="Erase" />
            <Tool icon="explode" name="Explode" />
            <Tool icon="offset" name="Offset" />
          </Column>
        </Panel>
        <Panel title="Annotation" w={151}>
          <Big icon="text" label="Text" w={38} caret />
          <Big icon="dim" label="Dimension" w={48} />
          <Column $w={60} $gap={4}>
            <Tool icon="linear" label="Linear" caret />
            <Tool icon="leader" label="Leader" caret />
            <Tool icon="table" label="Table" />
          </Column>
        </Panel>
        <Panel title="Layers" w={219}>
          <Big icon="layers" label="Layer Properties" w={50} />
          <LayerTools>
            <Combo>
              <Icon name="bulb" size={13} /><Icon name="sun" size={13} /><Icon name="unlock" size={13} /><Swatch />
              <ComboSelect aria-label="Layer"><option>beton</option></ComboSelect>
              <Icon name="caret" size={8} />
            </Combo>
            <LayerRow>
              <Tool icon="layOff" name="Off" /><Tool icon="layIso" name="Isolate" /><Tool icon="layFrz" name="Freeze" /><Tool icon="layLock" name="Lock" />
              <Tool icon="layCur" label="Make Current" />
            </LayerRow>
            <LayerRow>
              <Tool icon="layOn" name="Turn all on" /><Tool icon="layIso" name="Unisolate" /><Tool icon="layThaw" name="Thaw all" /><Tool icon="layUn" name="Unlock" />
              <Tool icon="layMatch" label="Match Layer" />
            </LayerRow>
          </LayerTools>
        </Panel>
        <Panel title="Block" w={129}>
          <Big icon="insert" label="Insert" w={34} caret />
          <Column $w={92} $gap={1}>
            <Tool icon="create" label="Create" />
            <Tool icon="edit" label="Edit" />
            <Tool icon="attr" label="Edit Attributes" caret />
          </Column>
        </Panel>
        <Panel title="Properties" w={212} launch>
          <Big icon="match" label="Match Properties" w={50} />
          <Column $w={16}>
            <Tool icon="wheel" name="Object color" />
            <Tool icon="weights" name="Lineweight" />
            <Tool icon="types" name="Linetype" />
          </Column>
          <PropCombos>
            <Combo><Swatch $left={6} /><ComboSelect aria-label="Color" $pad={6}><option>ByLayer</option></ComboSelect><Icon name="caret" size={8} /></Combo>
            <Combo><LineSample /><ComboSelect aria-label="Weight" $pad={0}><option>ByLayer</option></ComboSelect><Icon name="caret" size={8} /></Combo>
            <Combo><LineSample /><ComboSelect aria-label="Linetype" $pad={0}><option>ByLayer</option></ComboSelect><Icon name="caret" size={8} /></Combo>
          </PropCombos>
        </Panel>
        <Panel title="Groups" w={55}>
          <Big icon="group" label="Group" w={34} />
          <Column $w={18} $gap={1}>
            <Tool icon="ungroup" name="Ungroup" />
            <Tool icon="groupEdit" name="Group edit" />
            <Tool icon="groupSel" name="Group selection" active />
          </Column>
        </Panel>
        <Panel title="Utilities" w={78}>
          <Big icon="measure" label="Measure" w={58} caret />
          <Column $w={18}>
            <Tool icon="selSim" name="Quick select" />
            <Tool icon="selAll" name="Select all" />
            <Tool icon="calc" name="Calculator" />
          </Column>
        </Panel>
        <Panel title="Clipboard" w={64} caret={false}>
          <Big icon="paste" label="Paste" w={44} caret />
          <Column $w={18}>
            <Tool icon="cut" name="Cut" />
            <Tool icon="copyClip" name="Copy clip" />
          </Column>
        </Panel>
        <Panel title="View" w={49} launch>
          <Big icon="base" label="Base" w={48} caret />
        </Panel>
      </Ribbon>

      <FileTabs>
        {files.map(([name, w], i) => (
          <FileTab key={name} $w={w} $on={i === 11}>
            <FileName>{name}</FileName>
            {i > 0 && <CloseTab aria-label={'Close ' + name}><Icon name="x" size={9} /></CloseTab>}
          </FileTab>
        ))}
        <NewTab aria-label="New drawing"><Icon name="plus" size={11} /></NewTab>
      </FileTabs>

      <Canvas>
        <Model />
        <ViewLabel>[−][Top][2D Wireframe]</ViewLabel>
        <DocButtons>
          <CellButton aria-label="Minimize drawing" $w={16}><Icon name="minW" size={10} /></CellButton>
          <CellButton aria-label="Restore drawing" $w={16}><Icon name="restoreW" size={9} /></CellButton>
          <CellButton aria-label="Close drawing" $w={16}><Icon name="closeW" size={9} /></CellButton>
        </DocButtons>
        <Compass>
          <b>N</b>
          <div><b>W</b><Cube>TOP</Cube><b>E</b></div>
          <b>S</b>
        </Compass>
        <Wcs>WCS</Wcs>
        <NavBar>
          <svg width="26" height="170" viewBox="0 0 26 170" fill="none" stroke="#3b4048" aria-hidden="true">
            <circle cx="21" cy="5" r="2.500" />
            <path d="M5 25a8 8 0 0 1 8-8h8v8a8 8 0 1 1-16 0z" /><circle cx="13" cy="25" r="5" /><path d="M8 31h10" />
            <path d="M11 40h4l-2 2z" fill="#3b4048" />
            <path d="M2 45.500h22" stroke="#777c7e" />
            <path d="M8 67q-6-6-4-8 2 0 4 3l-1-9 2 0 1 6 1-8h2v8l2-7 2 1-1 8 3-4 2 1q-2 9-5 10z" fill="#74797b" />
            <path d="M4 73l12 12M16 73L4 85M4 76v-3h3M13 73h3v3M4 82v3h3" /><circle cx="16" cy="84" r="4" /><path d="M19 87l4 3" strokeWidth="2" />
            <path d="M11 96h4l-2 2z" fill="#3b4048" />
            <path d="M11 105l2-3 2 3h-1v14h-2v-14z" /><ellipse cx="13" cy="112" rx="9" ry="4" /><path d="M8 108l-3 4 4 2" />
            <path d="M11 126h4l-2 2z" fill="#3b4048" />
            <path d="M2 132.500h22" stroke="#777c7e" />
            <path d="M4 136h4v5H4zM11 136h4v5h-4zM18 136h4v5h-4zM4 144h13v9H4z" /><path d="M9 146l5 3-5 3z" fill="#3b4048" />
            <circle cx="21" cy="165" r="2.500" />
          </svg>
        </NavBar>
        <CommandArea>
          <History>Autodesk DWG.  This file is a TrustedDWG last saved by an Autodesk application or Autodesk<br />licensed application.</History>
          <Past>Command:</Past>
          <Past>Command:</Past>
          <CommandBar>
            <CommandHandle>
              <Icon name="grip" size={12} />
              <CellButton aria-label="Close command line" $w={12}><Icon name="closeC" size={10} /></CellButton>
              <CellButton aria-label="Command settings" $w={14}><Icon name="wrench" size={12} /></CellButton>
            </CommandHandle>
            <Icon name="prompt" size={13} />
            <Icon name="caretDark" size={6} />
            <CommandInput aria-label="Command" placeholder="Type a command" />
            <CellButton aria-label="Command history" $w={12}><Icon name="upDark" size={8} /></CellButton>
          </CommandBar>
        </CommandArea>
        <EdgeStrip />
      </Canvas>

      <StatusBar>
        <LayoutTabs>
          <LayoutTab $on>Model</LayoutTab>
          <LayoutTab>Layout1</LayoutTab>
          <LayoutTab>Layout2</LayoutTab>
          <CellButton aria-label="New layout" $w={22}><Icon name="plus" size={9} /></CellButton>
        </LayoutTabs>
        <StatusTools>
          <Coords>401.1328, -198.2862, 0.0000</Coords>
          <StatusButton $w={42} $line>MODEL</StatusButton>
          {status.map(([icon, name, w, on, line], i) => (
            <StatusButton key={i} aria-label={name || icon} $w={w} $on={on} $line={line}>
              {name ? <Icon name={icon} size={icon === 'caret' ? 8 : 14} /> : icon}
            </StatusButton>
          ))}
        </StatusTools>
      </StatusBar>
    </Window>
  );
}

export default App;

const GlobalStyle = createGlobalStyle`
    * { box-sizing: border-box; }
    body { margin: 0; background: #383838; }
    button, input, select {
        font: inherit;
        color: inherit;
        border: none;
        background: none;
        padding: 0;
        margin: 0;
        outline: none;
    }
    svg { display: block; flex-shrink: 0; }
`;

const Window = styled.div`
    display: flex;
    flex-direction: column;
    min-height: 100vh;
    overflow: hidden;
    font: 9px/12px "Open Sans", "Noto Sans", sans-serif;
    color: #e8e8e8;
`;

const Header = styled.header`
    display: grid;
    grid-template-columns: 33px 1fr;
    grid-template-rows: 20px 16px;
    background: #4e4e4e;
`;

const AppButton = styled.button`
    grid-row: 1 / 3;
    width: 32px;
    height: 33px;
    border: 1px solid #3a2524;
    background: linear-gradient(#c8c8c8, #8e8e8e);
`;

const TitleBar = styled.div`
    display: flex;
    background: #602216;
    border-bottom: 1px solid #3c3c3c;
`;

const CellButton = styled.button`
    width: ${p => p.$w}px;
    flex-shrink: 0;
    display: flex;
    align-items: center;
    justify-content: center;
`;

const QuickBar = styled.div`
    display: flex;
    width: 248px;
    flex-shrink: 0;
    padding-left: 4px;
    background: linear-gradient(#929494, #a2a4a4);
`;

const Title = styled.div`
    flex: 1;
    display: flex;
    justify-content: center;
    align-items: center;
    gap: 9px;
    white-space: nowrap;
    color: #260e09;
`;

const InfoBar = styled.div`
    display: flex;
    flex-shrink: 0;
    width: 358px;
    background: linear-gradient(#919393, #a2a4a4);
`;

const Search = styled.input`
    width: 144px;
    flex-shrink: 0;
    padding: 0 2px;
    background: #6b6c6c;
    border: 1px solid #4b4b4b;

    &::placeholder{
        color: #c8c8c8;
        font-style: italic;
    }
`;

const SignIn = styled.button`
    width: 97px;
    display: flex;
    align-items: center;
    gap: 5px;
    padding: 0 3px 0 3px;
    color: #eee;

    > :last-child{
        margin-left: auto;
    }
`;

const WindowButtons = styled.div`
    display: flex;
    width: 130px;
    flex-shrink: 0;
    justify-content: flex-end;
`;

const MenuTabs = styled.nav`
    display: flex;
    padding-left: 5px;
`;

const MenuTab = styled.button`
    padding: 0 7px;
    height: 16px;
    line-height: 15px;
    white-space: nowrap;
    color: ${p => p.$on ? '#f2f2f2' : '#cfcfcf'};
    background: ${p => p.$on ? 'linear-gradient(#7b7b7b, #5e5e5e)' : 'none'};
    border: 1px solid ${p => p.$on ? '#858585' : 'transparent'};
    border-width: 1px 1px 0;
`;

const RibbonToggle = styled.button`
    display: flex;
    align-items: center;
    gap: 4px;
    margin-left: 17px;
`;

const Ribbon = styled.div`
    display: flex;
    height: 78px;
    padding-left: 2px;
    background: linear-gradient(#4e4e4e 0, #4a4a4a 22px, #444 22px, #434343 49px, #383838 49px);
`;

const PanelBox = styled.section`
    width: ${p => p.$w}px;
    flex-shrink: 0;
    display: flex;
    flex-direction: column;
    background: #5b5b5b;
    border-right: 1px solid #444;
    border-top: 1px solid #6a6a6a;
`;

const PanelBody = styled.div`
    flex: 1;
    display: flex;
    align-items: flex-start;
    padding-top: 2px;
`;

const PanelTitle = styled.div`
    height: 15px;
    display: flex;
    align-items: center;
    justify-content: center;
    gap: 4px;
    background: linear-gradient(#505050, #484848);
`;

const Launch = styled.button`
    margin-left: auto;
    margin-right: 2px;

    /* keeps the title centred beside the launcher */
    ${PanelTitle}:has(&) > span{
        margin-left: auto;
    }
`;

const BigButton = styled.button`
    width: ${p => p.$w}px;
    flex-shrink: 0;
    display: flex;
    flex-direction: column;
    align-items: center;
    padding-top: 1px;

    > span{
        margin-top: 2px;
        line-height: 12px;
    }
`;

const Column = styled.div`
    width: ${p => p.$w}px;
    margin-left: ${p => p.$gap || 0}px;
    flex-shrink: 0;

    > button > span{
        min-width: ${p => p.$label || 0}px;
        text-align: left;
    }
`;

const ToolButton = styled.button`
    height: 19px;
    min-width: 16px;
    display: flex;
    align-items: center;
    gap: 3px;
    white-space: nowrap;
    background: ${p => p.$on ? '#5379ab' : 'none'};
    box-shadow: ${p => p.$on ? '0 0 0 1px #88a5c8' : 'none'};

    > span + svg{
        margin-left: 3px;
    }
`;

const LayerTools = styled.div`
    width: 167px;
`;

const LayerRow = styled.div`
    display: flex;
    gap: 3px;
    padding-left: 3px;
`;

const Combo = styled.div`
    height: 17px;
    margin: 1px 0;
    padding: 0 1px 0 3px;
    display: flex;
    align-items: center;
    gap: 2px;
    background: linear-gradient(#4c4c4c, #666);
    border: 1px solid #3d3d3d;
`;

const ComboSelect = styled.select`
    flex: 1;
    min-width: 0;
    appearance: none;
    height: 14px;
    line-height: 14px;
    padding-left: ${p => p.$pad ?? 3}px;
`;

const Swatch = styled.span`
    width: 12px;
    height: 12px;
    margin-left: ${p => p.$left || 2}px;
    background: #18a040;
    border: 1px solid #222;
`;

const LineSample = styled.span`
    width: 50px;
    height: 1px;
    background: #d4d4d4;
`;

const PropCombos = styled.div`
    width: 144px;

    > ${Combo}{
        margin-bottom: 2px;
    }
`;

const FileTabs = styled.div`
    display: flex;
    height: 24px;
    padding: 2px 0 0 18px;
    background: #343434;
    border-top: 1px solid #606060;
    border-bottom: 1px solid #5d5d5d;
`;

const FileTab = styled.div`
    position: relative;
    z-index: 0;
    width: ${p => p.$w}px;
    flex-shrink: 0;
    display: flex;
    align-items: center;
    justify-content: space-between;
    padding: 0 8px;
    white-space: nowrap;
    color: ${p => p.$on ? '#f0f0f0' : '#a6a6a6'};

    &::before, &::after{
        content: "";
        position: absolute;
        z-index: -1;
        top: 0;
        bottom: 0;
        background: ${p => p.$on ? 'linear-gradient(#7a7a7a, #5e5e5e)' : 'linear-gradient(#545454, #494949)'};
        border-top: 1px solid ${p => p.$on ? '#8c8c8c' : '#5e5e5e'};
    }
    &::before{
        left: 2px;
        right: 50%;
        transform: skewX(-20deg);
        border-left: 1px solid #666;
        border-top-left-radius: 6px;
    }
    &::after{
        left: 40%;
        right: 0;
        transform: skewX(20deg);
        border-right: 1px solid #2c2c2c;
        border-top-right-radius: 8px;
    }
`;

const FileName = styled.button`
    white-space: nowrap;
`;

const CloseTab = styled.button`
    line-height: 0;
`;

const NewTab = styled.button`
    margin-left: 3px;
    width: 18px;
    flex-shrink: 0;
    display: flex;
    align-items: center;
    justify-content: center;
    background: #4c4c4c;
    border-radius: 8px 0 0 8px;
`;

const Canvas = styled.main`
    position: relative;
    flex: 1;
    min-height: 560px;
    background: #212830;
    overflow: hidden;
`;

const ModelSpace = styled.svg`
    position: absolute;
    inset: 0;
    width: 100%;
    height: 100%;
`;

const SheetText = styled.text`
    font-family: "Liberation Serif", serif;
    fill: #e4e6e8;
`;

const ViewLabel = styled.div`
    position: absolute;
    left: 3px;
    top: 6px;
`;

const DocButtons = styled.div`
    position: absolute;
    top: 8px;
    right: 11px;
    display: flex;
`;

const Compass = styled.div`
    position: absolute;
    top: 37px;
    right: 24px;
    width: 97px;
    height: 97px;
    border: 11px solid #414952;
    border-radius: 50%;
    display: flex;
    flex-direction: column;
    align-items: center;
    justify-content: space-between;
    font: bold 16px/18px "Liberation Sans", sans-serif;
    color: #b4b7b9;

    > b{
        margin: -16px 0;
    }

    > div{
        display: flex;
        align-items: center;
        justify-content: space-between;
        width: 106px;
    }

    > div > b{
        width: 16px;
        text-align: center;
    }
`;

const Cube = styled.span`
    width: 42px;
    height: 42px;
    line-height: 24px;
    font-size: 9px;
    text-align: center;
    color: #4a515d;
    background: #a4a6a8;
    border: 9px solid #b1b3b5;
`;

const Wcs = styled.button`
    position: absolute;
    top: 155px;
    right: 53px;
    width: 38px;
    height: 14px;
    padding-left: 4px;
    border-radius: 4px;
    text-align: left;
    color: #5a5f64;
    background: #909497;
`;

const NavBar = styled.div`
    position: absolute;
    top: 189px;
    right: 9px;
    background: #595f62;
    border-radius: 4px;
`;

const CommandArea = styled.div`
    position: absolute;
    left: 468px;
    right: 467px;
    bottom: 0;
    font-family: "Liberation Mono", monospace;
    display: flex;
    flex-direction: column;
    align-items: flex-start;
    gap: 4px;
`;

const History = styled.div`
    width: 512px;
    margin-left: 42px;
    padding: 0 5px;
    white-space: pre;
    color: #4b5156;
    background: rgba(120, 125, 130, .14);
`;

const Past = styled.div`
    margin-left: 43px;
    padding: 0 4px;
    color: #565b60;
    background: rgba(120, 125, 130, .14);
`;

const CommandBar = styled.div`
    width: 100%;
    height: 20px;
    display: flex;
    align-items: center;
    gap: 4px;
    background: rgba(228, 229, 229, .8);
`;

const CommandHandle = styled.div`
    display: flex;
    align-items: center;
    gap: 4px;
    width: 42px;
    height: 20px;
    background: #4c4f52;
`;

const CommandInput = styled.input`
    flex: 1;
    height: 18px;
    font-style: italic;

    &::placeholder{
        color: #6a6d70;
    }
`;

const EdgeStrip = styled.div`
    position: absolute;
    top: 0;
    right: 0;
    bottom: 0;
    width: 6px;
    background: #d3dff0;
    border-left: 1px solid #8b9199;
`;

const StatusBar = styled.footer`
    display: flex;
    justify-content: space-between;
    height: 21px;
    background: #383838;
    border-top: 1px solid #666;
`;

const LayoutTabs = styled.div`
    display: flex;
    height: 15px;
    padding-left: 7px;
`;

const LayoutTab = styled.button`
    width: 51px;
    font-weight: ${p => p.$on ? 700 : 400};
    color: ${p => p.$on ? '#fff' : '#aaa'};
    background: ${p => p.$on ? '#5c5c5c' : '#474747'};
    border-right: 1px solid #333;
    border-radius: 0 0 8px 8px;
`;

const StatusTools = styled.div`
    display: flex;
    flex-shrink: 0;
    background: #525252;
    font-weight: 600;
`;

const Coords = styled.span`
    width: 145px;
    padding-right: 4px;
    line-height: 21px;
    text-align: right;
    border-left: 1px solid #6a6a6a;
`;

const StatusButton = styled.button`
    width: ${p => p.$w}px;
    display: flex;
    align-items: center;
    justify-content: center;
    white-space: nowrap;
    background: ${p => p.$on ? '#5b8ac3' : 'none'};
    background-clip: padding-box;
    border: 1px solid transparent;
    border-left-color: ${p => p.$line ? '#6d6d6d' : 'transparent'};
`;
